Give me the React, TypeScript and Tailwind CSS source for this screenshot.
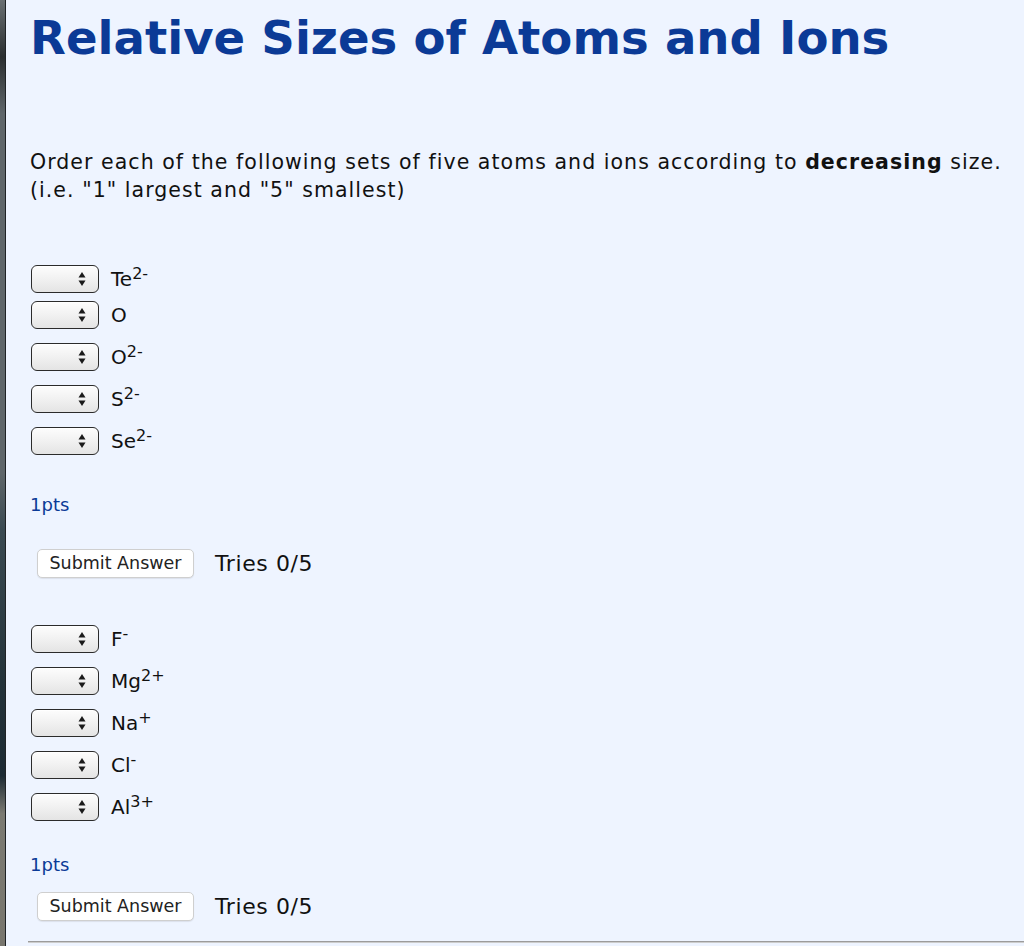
import React from 'react'

type Item = { base: string; sup?: string }

const SET_ONE: Item[] = [
  { base: 'Te', sup: '2-' },
  { base: 'O' },
  { base: 'O', sup: '2-' },
  { base: 'S', sup: '2-' },
  { base: 'Se', sup: '2-' },
]

const SET_TWO: Item[] = [
  { base: 'F', sup: '-' },
  { base: 'Mg', sup: '2+' },
  { base: 'Na', sup: '+' },
  { base: 'Cl', sup: '-' },
  { base: 'Al', sup: '3+' },
]

function FakeSelect() {
  return (
    <div className="relative ml-px h-[28px] w-[68px] shrink-0 rounded-[6px] border border-[#2b2b2b] bg-[linear-gradient(#fdfdfd,#f1f1f1_50%,#e4e4e4)] shadow-[inset_0_1px_0_#fff]">
      <svg className="absolute right-[12px] top-[5px]" width="8" height="16" viewBox="0 0 8 16">
        <path d="M0.5 6.5 L4 1 L7.5 6.5 Z" fill="#1a1a1a" />
        <path d="M0.5 9.5 L4 15 L7.5 9.5 Z" fill="#1a1a1a" />
      </svg>
    </div>
  )
}

function Row({ item, first }: { item: Item; first: boolean }) {
  const top = first ? '' : item.sup ? 'mt-[14px]' : 'mt-[8px]'
  return (
    <div className={`flex h-[28px] items-center ${top}`}>
      <FakeSelect />
      <span className="ml-[12px] text-[20px] leading-none text-[#111]">
        {item.base}
        {item.sup && <sup className="relative -top-[7px] text-[16px] leading-none">{item.sup}</sup>}
      </span>
    </div>
  )
}

function Submit() {
  return (
    <div className="flex items-center">
      <button
        type="button"
        className="ml-[7px] h-[29px] w-[157px] rounded-[5px] border border-[#cfcfcf] bg-white text-[17.5px] leading-none text-[#222] shadow-[0_1px_1px_rgba(0,0,0,0.08)]"
      >
        Submit Answer
      </button>
      <span className="ml-[21px] text-[22px] leading-none tracking-[0.6px] text-[#111]">Tries 0/5</span>
    </div>
  )
}

export default function App() {
  return (
    <div className="flex h-[946px] w-[1024px] overflow-hidden bg-[#eef4ff] font-['DejaVu_Sans',Verdana,sans-serif]">
      <div className="w-[6px] shrink-0 border-r border-[#1f2326] bg-[linear-gradient(#6a7073,#2a2e30_6%,#5f666a_12%,#5f666a_50%,#3a4a52_56%,#24333a_72%,#1c2a33_82%,#7b7a72_86%,#78766e)]" />
      <div className="flex-1">
        <div className="pl-[24px]">
          <h1 className="mt-[15px] text-[46.6px] font-bold leading-[46px] text-[#0b3a96]">
            Relative Sizes of Atoms and Ions
          </h1>
          <p className="mt-[87px] text-[20.5px] leading-[28px] tracking-[1.05px] text-[#111]">
            Order each of the following sets of five atoms and ions according to <b>decreasing</b> size.
            <br />
            (i.e. "1" largest and "5" smallest)
          </p>

          <div className="mt-[61px]">
            {SET_ONE.map((it, i) => (
              <Row key={i} item={it} first={i === 0} />
            ))}
          </div>
          <div className="mt-[41px] text-[18px] leading-[18px] text-[#0b3a96]">1pts</div>
          <div className="mt-[35px]">
            <Submit />
          </div>

          <div className="mt-[47px]">
            {SET_TWO.map((it, i) => (
              <Row key={i} item={it} first={i === 0} />
            ))}
          </div>
          <div className="mt-[35px] text-[18px] leading-[18px] text-[#0b3a96]">1pts</div>
          <div className="mt-[18px]">
            <Submit />
          </div>
        </div>
        <div className="ml-[22px] mt-[20px] h-px bg-[#9c9c9c]" />
        <div className="ml-[22px] h-px bg-[#cdcdcd]" />
      </div>
    </div>
  )
}
